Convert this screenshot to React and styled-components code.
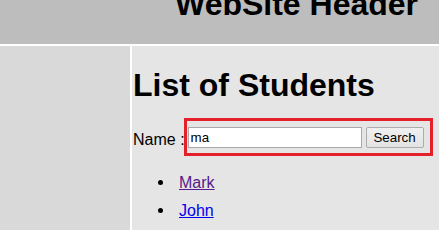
import styled, { createGlobalStyle } from 'styled-components';

const GlobalStyle = createGlobalStyle`
    html, body {
        margin: 0;
        padding: 0;
        background: #e5e5e5;
        font-family: "Liberation Sans", Arial, sans-serif;
    }
`

const students = [
    { name: 'Mark', visited: true },
    { name: 'John', visited: false },
    { name: 'Sam', visited: false },
];

const App = () => {
    return (
        <Page>
            <GlobalStyle />
            <Header>
                <HeaderTitle>WebSite Header</HeaderTitle>
            </Header>
            <Main>
                <Sidebar />
                <Content>
                    <Title>List of Students</Title>
                    <SearchRow>
                        <Label>Name :</Label>
                        <SearchBox>
                            <SearchInput type="text" defaultValue="ma" />
                            <SearchButton type="button">Search</SearchButton>
                        </SearchBox>
                    </SearchRow>
                    <StudentList>
                        {students.map(s => (
                            <Student key={s.name}>
                                <StudentLink href="#" $visited={s.visited}>{s.name}</StudentLink>
                            </Student>
                        ))}
                    </StudentList>
                </Content>
            </Main>
        </Page>
    );
}

const Page = styled.div`
    display: flex;
    flex-direction: column;
    height: 230px;
    overflow: hidden;
`

const Header = styled.header`
    height: 44px;
    flex-shrink: 0;
    background: #bdbdbd;
    border-bottom: 2px solid #ffffff;
    overflow: hidden;
`

const HeaderTitle = styled.h1`
    margin: -12px 0 0 175px;
    font-size: 32px;
    line-height: 32px;
    font-weight: bold;
    color: #000;
    white-space: nowrap;
`

const Main = styled.div`
    display: flex;
    flex: 1;
`

const Sidebar = styled.aside`
    width: 130px;
    flex-shrink: 0;
    background: #d9d9d9;
    border-right: 2px solid #ffffff;
`

const Content = styled.section`
    flex: 1;
    background: #e5e5e5;
    padding-left: 1px;
`

const Title = styled.h1`
    margin: 21px 0 0;
    font-size: 32px;
    line-height: 37px;
    font-weight: bold;
    color: #000;
`

const SearchRow = styled.div`
    display: flex;
    align-items: flex-start;
    margin-top: 14px;
`

const Label = styled.span`
    font-size: 16px;
    line-height: 18px;
    padding-top: 13px;
    margin-right: -1px;
    color: #000;
`

const SearchBox = styled.div`
    display: flex;
    align-items: center;
    gap: 4px;
    border: 3px solid #e4212b;
    padding: 6px 6px 5px 1px;
`

const SearchInput = styled.input`
    box-sizing: border-box;
    width: 174px;
    height: 21px;
    margin: 0;
    padding: 1px 2px;
    border: 1px solid #a9a9a9;
    background: #ffffff;
    font-family: "Liberation Sans", Arial, sans-serif;
    font-size: 13.33px;
    color: #000;
    outline: none;
`

const SearchButton = styled.button`
    box-sizing: border-box;
    width: 58px;
    height: 21px;
    margin: 0;
    padding: 0 6px;
    border: 1px solid #adadad;
    border-radius: 2px;
    background: linear-gradient(#f0f0f0, #e3e3e3);
    font-family: "Liberation Sans", Arial, sans-serif;
    font-size: 13.33px;
    color: #000;
`

const StudentList = styled.ul`
    margin: 13px 0 0;
    padding-left: 46px;
    font-size: 16px;
    line-height: 28px;
    list-style: none;
`

const Student = styled.li`
    &::before {
        content: '';
        display: inline-block;
        width: 5px;
        height: 5px;
        border-radius: 50%;
        background: #000;
        margin-left: -21px;
        margin-right: 16px;
        vertical-align: 3px;
    }
`

const StudentLink = styled.a`
    color: ${props => props.$visited ? '#551a8b' : '#0000ee'};
    text-decoration: underline;
`

export default App;
